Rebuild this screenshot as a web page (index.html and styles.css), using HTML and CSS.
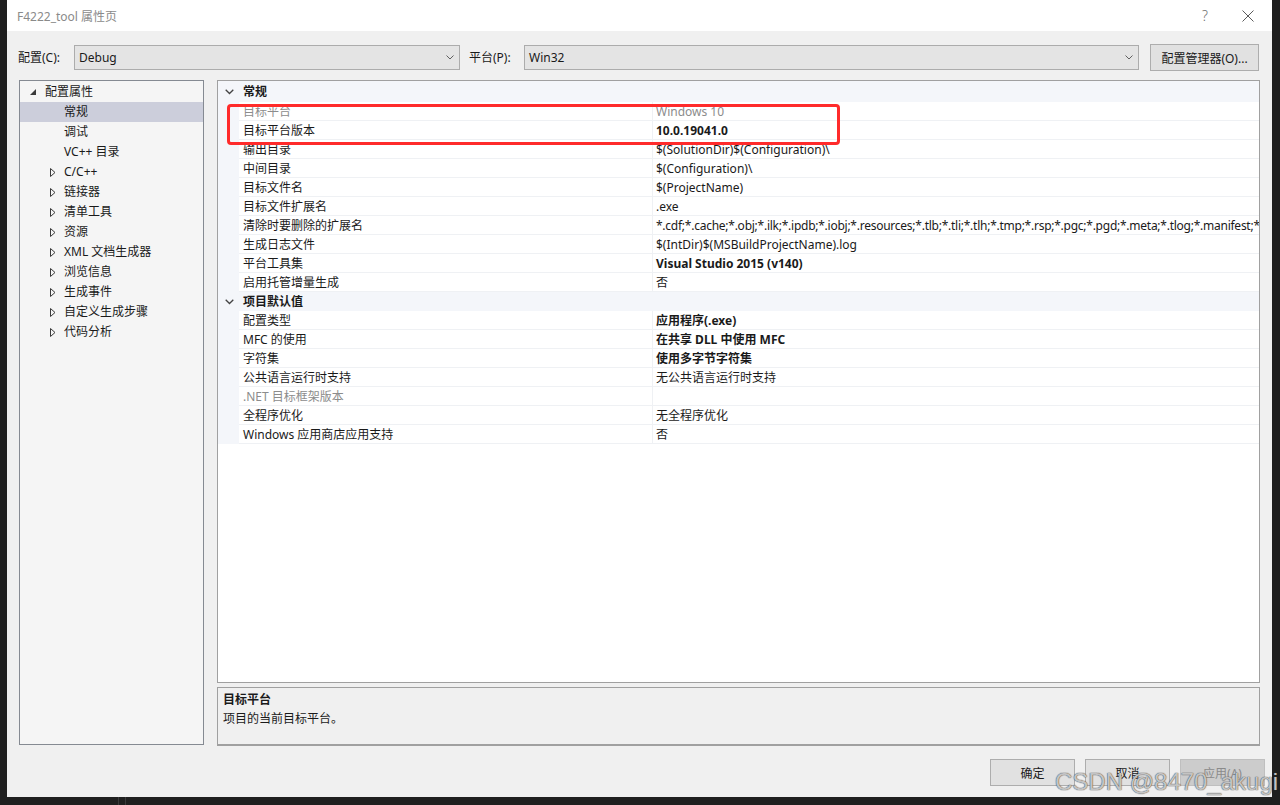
FILE: index.html
```html
<!DOCTYPE html>
<html lang="zh-CN">
<head>
<meta charset="utf-8">
<title>F4222_tool 属性页</title>
<link rel="stylesheet" href="styles.css">
</head>
<body>
<div class="window">
  <div class="titlebar">
    <span class="title">F4222_tool 属性页</span>
    <span class="help">?</span>
    <svg class="close" width="12" height="12" viewBox="0 0 12 12"><path d="M0.5 0.5 L11.5 11.5 M11.5 0.5 L0.5 11.5" stroke="#5a5a5a" stroke-width="1" fill="none"/></svg>
  </div>

  <div class="toolbar">
    <span class="lbl lbl-config">配置(C):</span>
    <div class="combo combo-config"><span>Debug</span><svg width="8" height="5" viewBox="0 0 8 5"><path d="M0.5 0.5 L4 4 L7.5 0.5" stroke="#606060" fill="none"/></svg></div>
    <span class="lbl lbl-platform">平台(P):</span>
    <div class="combo combo-platform"><span>Win32</span><svg width="8" height="5" viewBox="0 0 8 5"><path d="M0.5 0.5 L4 4 L7.5 0.5" stroke="#606060" fill="none"/></svg></div>
    <button class="btn btn-manager">配置管理器(O)...</button>
  </div>

  <div class="main">
    <div class="tree">
      <div class="titem lvl0"><span class="ticon"><svg width="6" height="6" viewBox="0 0 6 6"><path d="M6 0 L6 6 L0 6 Z" fill="#3a3a3a"/></svg></span>配置属性</div>
      <div class="titem lvl1 selected"><span class="ticon"></span>常规</div>
      <div class="titem lvl1"><span class="ticon"></span>调试</div>
      <div class="titem lvl1"><span class="ticon"></span>VC++ 目录</div>
      <div class="titem lvl1"><span class="ticon"><svg width="6" height="9" viewBox="0 0 6 9"><path d="M0.5 0.5 L5 4.5 L0.5 8.5 Z" fill="none" stroke="#3a3a3a"/></svg></span>C/C++</div>
      <div class="titem lvl1"><span class="ticon"><svg width="6" height="9" viewBox="0 0 6 9"><path d="M0.5 0.5 L5 4.5 L0.5 8.5 Z" fill="none" stroke="#3a3a3a"/></svg></span>链接器</div>
      <div class="titem lvl1"><span class="ticon"><svg width="6" height="9" viewBox="0 0 6 9"><path d="M0.5 0.5 L5 4.5 L0.5 8.5 Z" fill="none" stroke="#3a3a3a"/></svg></span>清单工具</div>
      <div class="titem lvl1"><span class="ticon"><svg width="6" height="9" viewBox="0 0 6 9"><path d="M0.5 0.5 L5 4.5 L0.5 8.5 Z" fill="none" stroke="#3a3a3a"/></svg></span>资源</div>
      <div class="titem lvl1"><span class="ticon"><svg width="6" height="9" viewBox="0 0 6 9"><path d="M0.5 0.5 L5 4.5 L0.5 8.5 Z" fill="none" stroke="#3a3a3a"/></svg></span>XML 文档生成器</div>
      <div class="titem lvl1"><span class="ticon"><svg width="6" height="9" viewBox="0 0 6 9"><path d="M0.5 0.5 L5 4.5 L0.5 8.5 Z" fill="none" stroke="#3a3a3a"/></svg></span>浏览信息</div>
      <div class="titem lvl1"><span class="ticon"><svg width="6" height="9" viewBox="0 0 6 9"><path d="M0.5 0.5 L5 4.5 L0.5 8.5 Z" fill="none" stroke="#3a3a3a"/></svg></span>生成事件</div>
      <div class="titem lvl1"><span class="ticon"><svg width="6" height="9" viewBox="0 0 6 9"><path d="M0.5 0.5 L5 4.5 L0.5 8.5 Z" fill="none" stroke="#3a3a3a"/></svg></span>自定义生成步骤</div>
      <div class="titem lvl1"><span class="ticon"><svg width="6" height="9" viewBox="0 0 6 9"><path d="M0.5 0.5 L5 4.5 L0.5 8.5 Z" fill="none" stroke="#3a3a3a"/></svg></span>代码分析</div>
    </div>

    <div class="right">
      <div class="grid">
        <div class="row cat first"><span class="gut"><svg width="9" height="6" viewBox="0 0 9 6"><path d="M0.7 0.7 L4.5 4.5 L8.3 0.7" stroke="#444" stroke-width="1.3" fill="none"/></svg></span><span class="catname">常规</span></div>
        <div class="row dim"><span class="gut"></span><span class="name">目标平台</span><span class="val">Windows 10</span></div>
        <div class="row"><span class="gut"></span><span class="name">目标平台版本</span><span class="val b">10.0.19041.0</span></div>
        <div class="row"><span class="gut"></span><span class="name">输出目录</span><span class="val">$(SolutionDir)$(Configuration)\</span></div>
        <div class="row"><span class="gut"></span><span class="name">中间目录</span><span class="val">$(Configuration)\</span></div>
        <div class="row"><span class="gut"></span><span class="name">目标文件名</span><span class="val">$(ProjectName)</span></div>
        <div class="row"><span class="gut"></span><span class="name">目标文件扩展名</span><span class="val">.exe</span></div>
        <div class="row"><span class="gut"></span><span class="name">清除时要删除的扩展名</span><span class="val tight">*.cdf;*.cache;*.obj;*.ilk;*.ipdb;*.iobj;*.resources;*.tlb;*.tli;*.tlh;*.tmp;*.rsp;*.pgc;*.pgd;*.meta;*.tlog;*.manifest;*.res;*.pch;*.exp;*.idb;*.rep;*.xdc;*.pdb;*_manifest.rc;*.bsc;*.sbr;*.xml;*.metagen;*.bi</span></div>
        <div class="row"><span class="gut"></span><span class="name">生成日志文件</span><span class="val">$(IntDir)$(MSBuildProjectName).log</span></div>
        <div class="row"><span class="gut"></span><span class="name">平台工具集</span><span class="val b">Visual Studio 2015 (v140)</span></div>
        <div class="row"><span class="gut"></span><span class="name">启用托管增量生成</span><span class="val">否</span></div>
        <div class="row cat"><span class="gut"><svg width="9" height="6" viewBox="0 0 9 6"><path d="M0.7 0.7 L4.5 4.5 L8.3 0.7" stroke="#444" stroke-width="1.3" fill="none"/></svg></span><span class="catname">项目默认值</span></div>
        <div class="row"><span class="gut"></span><span class="name">配置类型</span><span class="val b">应用程序(.exe)</span></div>
        <div class="row"><span class="gut"></span><span class="name">MFC 的使用</span><span class="val b">在共享 DLL 中使用 MFC</span></div>
        <div class="row"><span class="gut"></span><span class="name">字符集</span><span class="val b">使用多字节字符集</span></div>
        <div class="row"><span class="gut"></span><span class="name">公共语言运行时支持</span><span class="val">无公共语言运行时支持</span></div>
        <div class="row dim"><span class="gut"></span><span class="name">.NET 目标框架版本</span><span class="val"></span></div>
        <div class="row"><span class="gut"></span><span class="name">全程序优化</span><span class="val">无全程序优化</span></div>
        <div class="row"><span class="gut"></span><span class="name">Windows 应用商店应用支持</span><span class="val">否</span></div>
        <div class="highlight"></div>
      </div>
      <div class="desc">
        <div class="desc-title">目标平台</div>
        <div class="desc-text">项目的当前目标平台。</div>
      </div>
    </div>
  </div>

  <div class="footer">
    <button class="btn">确定</button>
    <button class="btn">取消</button>
    <button class="btn disabled">应用(A)</button>
  </div>
</div>
<div class="taskbar-mark"></div>
<div class="watermark">CSDN @8470_akugi</div>
</body>
</html>
```

FILE: styles.css
```css
html, body {
  margin: 0;
  padding: 0;
}
body {
  width: 1280px;
  height: 805px;
  overflow: hidden;
  position: relative;
  background: #1f1f1f;
  font-family: "Noto Sans", "Noto Sans CJK SC", sans-serif;
  font-size: 12px;
  color: #1a1a1a;
}
.window {
  margin-left: 7px;
  width: 1265px;
  height: 797px;
  background: #f0f0f0;
  display: flex;
  flex-direction: column;
}
.titlebar {
  height: 31px;
  flex: none;
  background: #ffffff;
  display: flex;
  align-items: center;
  padding: 0 18px 0 10px;
  color: #8a8a8a;
}
.title { flex: 1; }
.help {
  font-size: 14px;
  font-weight: 300;
  color: #707070;
  margin-right: 34px;
  line-height: 14px;
}
.close { display: block; }

.toolbar {
  display: flex;
  align-items: center;
  margin-top: 13px;
  padding-left: 11px;
  height: 27px;
}
.lbl { line-height: 16px; }
.lbl-config { width: 56px; }
.lbl-platform { width: 55px; margin-left: 9px; }
.combo {
  box-sizing: border-box;
  height: 25px;
  border: 1px solid #acacac;
  background: #e4e4e4;
  display: flex;
  align-items: center;
  justify-content: space-between;
  padding: 0 5px 1px 4px;
}
.combo svg { display: block; }
.combo-config { width: 386px; }
.combo-platform { width: 615px; }
.btn {
  box-sizing: border-box;
  height: 27px;
  border: 1px solid #adadad;
  background: #e1e1e1;
  font-family: "Noto Sans", "Noto Sans CJK SC", sans-serif;
  font-size: 12px;
  color: #1a1a1a;
  padding: 0;
}
.btn-manager { width: 109px; margin-left: 11px; }

.main {
  display: flex;
  margin-top: 9px;
  padding-left: 12px;
  gap: 13px;
  height: 666px;
}
.tree {
  box-sizing: border-box;
  width: 185px;
  height: 665px;
  border: 1px solid #858a92;
  background: #f5f5f5;
  padding-top: 1px;
}
.titem {
  height: 20px;
  line-height: 20px;
  display: flex;
  align-items: center;
  white-space: nowrap;
}
.ticon {
  display: flex;
  align-items: center;
  flex: none;
}
.ticon svg { display: block; }
.lvl0 { padding-left: 10px; }
.lvl0 .ticon { width: 15px; }
.lvl1 { padding-left: 30px; }
.lvl1 .ticon { width: 14px; }
.selected { background: #cccedb; }

.right {
  width: 1043px;
  display: flex;
  flex-direction: column;
}
.grid {
  position: relative;
  box-sizing: border-box;
  height: 603px;
  border: 1px solid #a0a0a0;
  background: #ffffff;
  overflow: hidden;
}
.row {
  display: grid;
  grid-template-columns: 21px 413px 1fr;
  height: 19px;
  line-height: 19px;
}
.gut {
  background: #f4f6fa;
  display: flex;
  align-items: center;
  justify-content: center;
}
.gut svg { display: block; margin-left: 1px; }
.name {
  padding-left: 4px;
  border-bottom: 1px solid #eff1f4;
  white-space: nowrap;
  overflow: hidden;
}
.val {
  padding-left: 3px;
  border-bottom: 1px solid #eff1f4;
  border-left: 1px solid #eff1f4;
  white-space: nowrap;
  overflow: hidden;
}
.tight { letter-spacing: -0.25px; }
.b { font-weight: 700; }
.dim .name, .dim .val { color: #8c8c8c; }
.cat { background: #f4f6fa; }
.cat.first { height: 21px; line-height: 22px; }
.catname {
  grid-column: 2 / 4;
  padding-left: 4px;
  font-weight: 700;
}
.highlight {
  position: absolute;
  left: 9px;
  top: 23px;
  width: 613px;
  height: 41px;
  box-sizing: border-box;
  border: 3px solid #ff2b2b;
  border-radius: 4px;
}
.desc {
  box-sizing: border-box;
  margin-top: 4px;
  height: 59px;
  border: 1px solid #a0a0a0;
  border-bottom-width: 2px;
  background: #f0f0f0;
  padding: 2px 5px 0;
  line-height: 19px;
}
.desc-title { font-weight: 700; }

.footer {
  display: flex;
  justify-content: flex-end;
  gap: 10px;
  margin-top: 13px;
  padding-right: 7px;
}
.footer .btn { width: 85px; }
.btn.disabled {
  background: #cccccc;
  border-color: #bfbfbf;
  color: #8a8a8a;
}
.taskbar-mark {
  position: absolute;
  left: 118px;
  top: 797px;
  width: 6px;
  height: 8px;
  border-left: 1px solid #3a3a3a;
  border-right: 1px solid #3a3a3a;
}
.watermark {
  position: absolute;
  left: 1055px;
  top: 770px;
  font-family: "Liberation Sans", sans-serif;
  font-size: 24px;
  line-height: 24px;
  color: rgba(255, 255, 255, 0.7);
  text-shadow: 0 0 1px rgba(60, 60, 60, 0.9), 0 0 1px rgba(60, 60, 60, 0.9);
  white-space: nowrap;
}
```
